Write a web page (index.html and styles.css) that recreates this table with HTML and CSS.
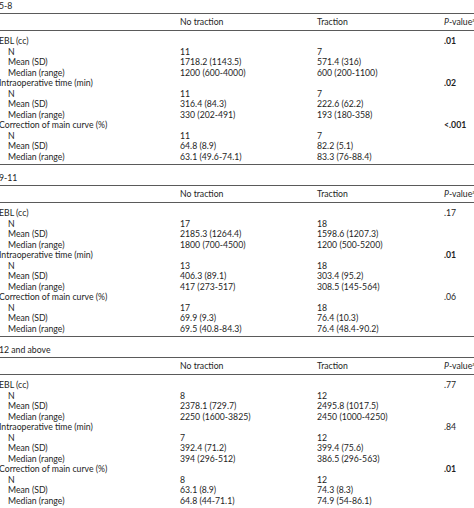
FILE: index.html
```html
<!DOCTYPE html>
<html>
<head>
<meta charset="utf-8">
<link rel="stylesheet" href="styles.css">
</head>
<body>
<div class="page">

  <section class="group">
    <div class="title">5-8</div>
    <div class="table">
      <div class="row head"><span></span><span>No traction</span><span>Traction</span><span class="pv"><i>P</i>-value<sup>a</sup></span></div>
      <div class="body">
        <div class="row"><span class="cat">EBL (cc)</span><span></span><span></span><span class="b">.01</span></div>
        <div class="row"><span class="sub">N</span><span>11</span><span>7</span><span></span></div>
        <div class="row"><span class="sub">Mean (SD)</span><span>1718.2 (1143.5)</span><span>571.4 (316)</span><span></span></div>
        <div class="row"><span class="sub">Median (range)</span><span>1200 (600-4000)</span><span>600 (200-1100)</span><span></span></div>
        <div class="row"><span class="cat">Intraoperative time (min)</span><span></span><span></span><span class="b">.02</span></div>
        <div class="row"><span class="sub">N</span><span>11</span><span>7</span><span></span></div>
        <div class="row"><span class="sub">Mean (SD)</span><span>316.4 (84.3)</span><span>222.6 (62.2)</span><span></span></div>
        <div class="row"><span class="sub">Median (range)</span><span>330 (202-491)</span><span>193 (180-358)</span><span></span></div>
        <div class="row"><span class="cat">Correction of main curve (%)</span><span></span><span></span><span class="b">&lt;.001</span></div>
        <div class="row"><span class="sub">N</span><span>11</span><span>7</span><span></span></div>
        <div class="row"><span class="sub">Mean (SD)</span><span>64.8 (8.9)</span><span>82.2 (5.1)</span><span></span></div>
        <div class="row"><span class="sub">Median (range)</span><span>63.1 (49.6-74.1)</span><span>83.3 (76-88.4)</span><span></span></div>
      </div>
    </div>
  </section>

  <section class="group">
    <div class="title">9-11</div>
    <div class="table">
      <div class="row head"><span></span><span>No traction</span><span>Traction</span><span class="pv"><i>P</i>-value<sup>a</sup></span></div>
      <div class="body">
        <div class="row"><span class="cat">EBL (cc)</span><span></span><span></span><span>.17</span></div>
        <div class="row"><span class="sub">N</span><span>17</span><span>18</span><span></span></div>
        <div class="row"><span class="sub">Mean (SD)</span><span>2185.3 (1264.4)</span><span>1598.6 (1207.3)</span><span></span></div>
        <div class="row"><span class="sub">Median (range)</span><span>1800 (700-4500)</span><span>1200 (500-5200)</span><span></span></div>
        <div class="row"><span class="cat">Intraoperative time (min)</span><span></span><span></span><span class="b">.01</span></div>
        <div class="row"><span class="sub">N</span><span>13</span><span>18</span><span></span></div>
        <div class="row"><span class="sub">Mean (SD)</span><span>406.3 (89.1)</span><span>303.4 (95.2)</span><span></span></div>
        <div class="row"><span class="sub">Median (range)</span><span>417 (273-517)</span><span>308.5 (145-564)</span><span></span></div>
        <div class="row"><span class="cat">Correction of main curve (%)</span><span></span><span></span><span>.06</span></div>
        <div class="row"><span class="sub">N</span><span>17</span><span>18</span><span></span></div>
        <div class="row"><span class="sub">Mean (SD)</span><span>69.9 (9.3)</span><span>76.4 (10.3)</span><span></span></div>
        <div class="row"><span class="sub">Median (range)</span><span>69.5 (40.8-84.3)</span><span>76.4 (48.4-90.2)</span><span></span></div>
      </div>
    </div>
  </section>

  <section class="group">
    <div class="title">12 and above</div>
    <div class="table">
      <div class="row head"><span></span><span>No traction</span><span>Traction</span><span class="pv"><i>P</i>-value<sup>a</sup></span></div>
      <div class="body">
        <div class="row"><span class="cat">EBL (cc)</span><span></span><span></span><span>.77</span></div>
        <div class="row"><span class="sub">N</span><span>8</span><span>12</span><span></span></div>
        <div class="row"><span class="sub">Mean (SD)</span><span>2378.1 (729.7)</span><span>2495.8 (1017.5)</span><span></span></div>
        <div class="row"><span class="sub">Median (range)</span><span>2250 (1600-3825)</span><span>2450 (1000-4250)</span><span></span></div>
        <div class="row"><span class="cat">Intraoperative time (min)</span><span></span><span></span><span>.84</span></div>
        <div class="row"><span class="sub">N</span><span>7</span><span>12</span><span></span></div>
        <div class="row"><span class="sub">Mean (SD)</span><span>392.4 (71.2)</span><span>399.4 (75.6)</span><span></span></div>
        <div class="row"><span class="sub">Median (range)</span><span>394 (296-512)</span><span>386.5 (296-563)</span><span></span></div>
        <div class="row"><span class="cat">Correction of main curve (%)</span><span></span><span></span><span class="b">.01</span></div>
        <div class="row"><span class="sub">N</span><span>8</span><span>12</span><span></span></div>
        <div class="row"><span class="sub">Mean (SD)</span><span>63.1 (8.9)</span><span>74.3 (8.3)</span><span></span></div>
        <div class="row"><span class="sub">Median (range)</span><span>64.8 (44-71.1)</span><span>74.9 (54-86.1)</span><span></span></div>
      </div>
    </div>
  </section>

</div>
</body>
</html>
```

FILE: styles.css
```css
html, body {
  margin: 0;
  padding: 0;
  background: #fff;
}

body {
  font-family: "Lato", "Open Sans", "Liberation Sans", sans-serif;
  font-size: 8.7px;
  color: #1e1e1e;
  width: 474px;
  height: 508px;
  overflow: hidden;
}

.page {
  margin-left: -1px;
}

.group {
  margin-bottom: 7px;
}

.title {
  height: 13px;
  line-height: 12px;
}

.table {
  border-top: 1px solid #5a5a5a;
  border-bottom: 1px solid #5a5a5a;
}

.row {
  display: grid;
  grid-template-columns: 181px 137px 127px 1fr;
  height: 10.5px;
  line-height: 10.5px;
  white-space: nowrap;
}

.row.head {
  height: 16px;
  line-height: 16px;
  border-bottom: 1px solid #5a5a5a;
}

.body {
  padding: 5px 0 2px;
}

.sub {
  padding-left: 9px;
}

.b {
  font-weight: 700;
}

.pv sup {
  font-size: 5px;
  line-height: 0;
  vertical-align: 3px;
}
```
